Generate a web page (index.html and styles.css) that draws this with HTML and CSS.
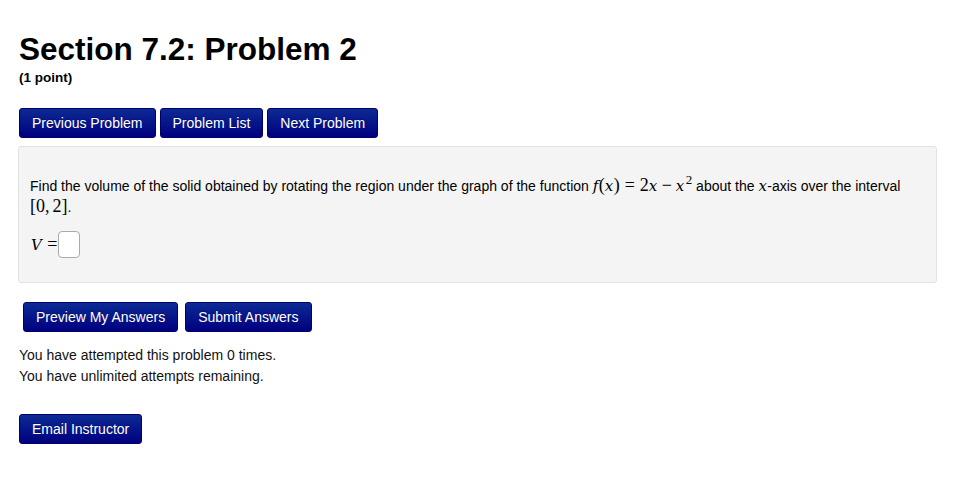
FILE: index.html
```html
<!DOCTYPE html>
<html lang="en">
<head>
<meta charset="utf-8">
<title>Section 7.2: Problem 2</title>
<link rel="stylesheet" href="styles.css">
</head>
<body>
<main class="page">
  <h1 class="title">Section 7.2: Problem 2</h1>
  <div class="points">(1 point)</div>
  <nav class="nav">
    <button class="btn">Previous Problem</button>
    <button class="btn">Problem List</button>
    <button class="btn">Next Problem</button>
  </nav>
  <section class="problem">
    <p class="statement">Find the volume of the solid obtained by rotating the region under the graph of the function <span class="math"><i>f</i>(<i>x</i>)<span class="rel">=</span>2<i>x</i><span class="bin">−</span><i>x</i><sup>2</sup></span> about the <span class="math"><i>x</i></span>-axis over the interval <span class="math">[0,<span class="thin"></span>2]</span>.</p>
    <div class="answer-row">
      <span class="math"><i>V</i><span class="rel rel-end">=</span></span><input class="answer" type="text" aria-label="V">
    </div>
  </section>
  <div class="submit-row">
    <button class="btn">Preview My Answers</button>
    <button class="btn">Submit Answers</button>
  </div>
  <div class="attempts">
    <div>You have attempted this problem 0 times.</div>
    <div>You have unlimited attempts remaining.</div>
  </div>
  <div class="email-row">
    <button class="btn">Email Instructor</button>
  </div>
</main>
</body>
</html>
```
FILE: styles.css
```css
html, body {
  margin: 0;
  padding: 0;
  background: #fff;
}
body {
  font-family: "Liberation Sans", Arial, sans-serif;
  color: #000;
  font-size: 14px;
}
.page {
  padding: 30px 40px 20px 18px;
}
.title {
  margin: 0 0 0 1px;
  font-size: 31.5px;
  font-weight: bold;
  line-height: 38px;
}
.points {
  margin: 2px 0 0 1px;
  font-size: 13.5px;
  font-weight: bold;
  line-height: 16px;
}
.nav {
  display: flex;
  gap: 4px;
  margin: 22px 0 0 1px;
}
.btn {
  font-family: "Liberation Sans", Arial, sans-serif;
  font-size: 14px;
  color: #fff;
  background: linear-gradient(to bottom, #0c2a94, #00007f);
  border: 1px solid #00006a;
  border-radius: 3px;
  height: 30px;
  padding: 0 12px;
  cursor: pointer;
  text-shadow: 0 -1px 0 rgba(0,0,0,0.25);
}
.problem {
  margin-top: 8px;
  background: #f4f4f4;
  border: 1px solid #e2e2e2;
  border-radius: 3px;
  padding: 28px 11px 24px;
}
.statement {
  margin: 0;
  line-height: 20px;
}
.math {
  font-family: "Liberation Serif", "Times New Roman", serif;
  font-size: 18px;
  white-space: nowrap;
}
.math i {
  font-family: "DejaVu Serif", serif;
  font-style: italic;
  font-size: 15px;
  padding-right: 0.03em;
}
.math sup {
  font-size: 13px;
  line-height: 0;
  margin-left: 1px;
}
.rel {
  margin: 0 0.28em;
}
.rel-end {
  margin-right: 0;
}
.bin {
  margin: 0 0.22em;
}
.thin {
  display: inline-block;
  width: 0.17em;
}
.answer-row {
  display: flex;
  align-items: center;
  margin-top: 14px;
  padding-left: 1px;
}
.answer {
  width: 20px;
  height: 25px;
  margin: 0 0 0 1px;
  padding: 0;
  border: 1px solid #aaa;
  border-radius: 4px;
  background: #fff;
}
.submit-row {
  display: flex;
  gap: 7px;
  margin: 19px 0 0 5px;
}
.attempts {
  margin: 13px 0 0 1px;
  line-height: 21px;
  color: #111;
}
.email-row {
  margin: 27px 0 0 1px;
}
```
